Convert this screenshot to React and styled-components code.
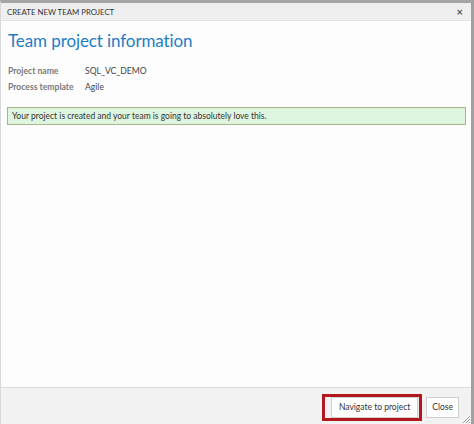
import React from 'react'
import styled, { createGlobalStyle } from 'styled-components'

const Global = createGlobalStyle`
  html, body { margin: 0; padding: 0; background: #fff; }
  body { font-family: Lato, "Open Sans", sans-serif; }
`;

const Window = styled.div`
  width: 474px;
  height: 424px;
  box-sizing: border-box;
  display: flex;
  flex-direction: column;
  border-top: 3px solid #a4a4a4;
  border-right: 3px solid #a0a0a0;
  border-left: 1px solid #d8d8d8;
  background: #fdfdfd;
  position: relative;
`;

const TitleBar = styled.div`
  height: 17px;
  display: flex;
  align-items: center;
  justify-content: space-between;
  padding: 0 8px 0 6px;
  background: #efefef;
  border-bottom: 1px solid #e2e2e2;
  font-size: 7.8px;
  color: #333;
`;

const CloseX = styled.span`
  font-size: 11px;
  color: #555;
  font-weight: 700;
  line-height: 1;
`;

const Content = styled.div`
  flex: 1;
  padding: 8px 6px 0 6px;
  background: #fdfdfd;
`;

const Heading = styled.h1`
  margin: 0 0 0 1px;
  font-weight: 400;
  font-size: 17px;
  line-height: 24px;
  letter-spacing: -0.1px;
  color: #1f7cc6;
`;

const Details = styled.div`
  margin-top: 13px;
  display: grid;
  grid-template-columns: 77px 1fr;
  row-gap: 5px;
  font-size: 8.6px;
  line-height: 11px;
  padding-left: 1px;
`;

const Label = styled.span`
  color: #7a7a7a;
  font-weight: 700;
`;

const Value = styled.span`
  color: #444;
`;

const Notice = styled.div`
  margin-top: 14px;
  width: 459px;
  box-sizing: border-box;
  height: 18px;
  display: flex;
  align-items: center;
  padding: 0 4px;
  background: #dff5df;
  border: 1px solid #a9b58a;
  font-size: 8.5px;
  color: #333;
`;

const Footer = styled.div`
  height: 34px;
  display: flex;
  align-items: center;
  justify-content: flex-end;
  gap: 4px;
  padding: 2px 12px 0 0;
  background: #f2f2f2;
  border-top: 1px solid #dcdcdc;
`;

const Highlight = styled.div`
  border: 3px solid #b3171d;
  padding: 0 1px 0 6px;
  display: flex;
  align-items: center;
  height: 21px;
`;

const Button = styled.button`
  height: 21px;
  padding: 0 ${p => p.$pad}px;
  background: #fff;
  border: 1px solid #cfcfcf;
  font-family: inherit;
  font-size: 8.5px;
  color: #333;
`;

const Grip = styled.svg`
  position: absolute;
  right: 1px;
  bottom: 1px;
`;

export default function App() {
  return (
    <>
      <Global />
      <Window>
        <TitleBar>
          <span>CREATE NEW TEAM PROJECT</span>
          <CloseX>×</CloseX>
        </TitleBar>
        <Content>
          <Heading>Team project information</Heading>
          <Details>
            <Label>Project name</Label>
            <Value>SQL_VC_DEMO</Value>
            <Label>Process template</Label>
            <Value>Agile</Value>
          </Details>
          <Notice>Your project is created and your team is going to absolutely love this.</Notice>
        </Content>
        <Footer>
          <Highlight>
            <Button $pad={7}>Navigate to project</Button>
          </Highlight>
          <Button $pad={5}>Close</Button>
        </Footer>
        <Grip width="8" height="8" viewBox="0 0 8 8">
          <path d="M8 1 L1 8 M8 4 L4 8 M8 7 L7 8" stroke="#888" strokeWidth="0.8" />
        </Grip>
      </Window>
    </>
  );
}
